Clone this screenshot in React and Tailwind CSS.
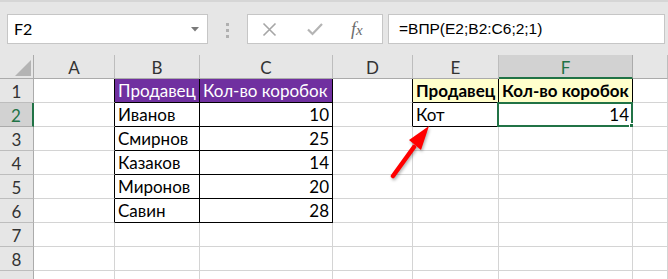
import { Fragment } from "react";

const COLS = ["A", "B", "C", "D", "E", "F", "G"];
const ROWS = [1, 2, 3, 4, 5, 6, 7, 8, 9];

// values of the sheet, keyed by cell address
const DATA = {
  B1: "Продавец",
  C1: "Кол-во коробок",
  B2: "Иванов",
  C2: "10",
  B3: "Смирнов",
  C3: "25",
  B4: "Казаков",
  C4: "14",
  B5: "Миронов",
  C5: "20",
  B6: "Савин",
  C6: "28",
  E1: "Продавец",
  F1: "Кол-во коробок",
  E2: "Кот",
  F2: "14",
};

// cells that have thin black borders
const inTable = (col, row) =>
  (["B", "C"].includes(col) && row >= 1 && row <= 6) ||
  (["E", "F"].includes(col) && row >= 1 && row <= 2);

const nextCol = (col) => COLS[COLS.indexOf(col) + 1];

function Cell({ col, row }) {
  const addr = col + row;
  const value = DATA[addr];
  const right = inTable(col, row) || (nextCol(col) && inTable(nextCol(col), row));
  const bottom = inTable(col, row) || inTable(col, row + 1);
  const isNumber = value && /^\d+$/.test(value);
  const purple = row === 1 && (col === "B" || col === "C");
  const yellow = row === 1 && (col === "E" || col === "F");
  const selected = addr === "F2";

  return (
    <div
      className={`relative flex h-[24px] items-end overflow-visible whitespace-nowrap border-r border-b px-[3px] pb-[1px] text-[17px] leading-[21px] ${
        right ? "border-r-black" : "border-r-[#d4d4d4]"
      } ${bottom ? "border-b-black" : "border-b-[#d4d4d4]"} ${
        isNumber ? "justify-end" : "justify-start"
      } ${purple ? "bg-[#7030a0] text-white" : ""} ${
        yellow ? "bg-[#ffffcc] font-bold text-black" : ""
      } ${!purple && !yellow ? "bg-white text-black" : ""}`}
    >
      {value}
      {selected && (
        <>
          <div className="pointer-events-none absolute -left-[2px] -top-[1px] bottom-[-1px] right-[-1px] border-2 border-[#217346]" />
          <div className="absolute -bottom-[4px] -right-[4px] h-[7px] w-[7px] border border-white bg-[#217346]" />
        </>
      )}
    </div>
  );
}

function Toolbar() {
  return (
    <div className="flex h-[55px] items-start border-t-2 border-t-[#d6d6d6] bg-[#e6e6e6] pt-[12px]">
      {/* name box */}
      <div className="ml-[7px] flex h-[30px] w-[201px] items-center justify-between border border-[#c6c6c6] bg-white pl-[6px] pr-[8px]">
        <span className="text-[16px] text-black">F2</span>
        <svg width="8" height="5" viewBox="0 0 8 5">
          <path d="M0 0h8L4 4.5z" fill="#7a7a7a" />
        </svg>
      </div>
      {/* splitter dots */}
      <div className="ml-[18px] mt-[9px] flex flex-col gap-[3px]">
        <div className="h-[3px] w-[3px] bg-[#b0b0b0]" />
        <div className="h-[3px] w-[3px] bg-[#b0b0b0]" />
        <div className="h-[3px] w-[3px] bg-[#b0b0b0]" />
      </div>
      {/* cancel / enter / fx */}
      <div className="ml-[18px] flex h-[30px] w-[136px] items-center border border-[#c6c6c6] bg-white">
        <svg className="ml-[14px]" width="15" height="15" viewBox="0 0 15 15">
          <path d="M1.5 1.5l12 12M13.5 1.5l-12 12" stroke="#a6a6a6" strokeWidth="1.6" />
        </svg>
        <svg className="ml-[30px]" width="16" height="14" viewBox="0 0 16 14">
          <path d="M1 7.5l4.5 4.5L15 2" stroke="#b4b4b4" strokeWidth="2.2" fill="none" />
        </svg>
        <span
          className="ml-[28px] text-[18px] italic text-[#6b6b6b]"
          style={{ fontFamily: '"Liberation Serif", serif' }}
        >
          f<span className="text-[15px]">x</span>
        </span>
      </div>
      {/* formula bar */}
      <div className="ml-[5px] mr-[3px] flex h-[30px] flex-1 items-center border border-[#c6c6c6] bg-white pl-[10px]">
        <span
          className="text-[15.5px] text-black"
          style={{ fontFamily: '"Liberation Sans", Arial, sans-serif' }}
        >
          =ВПР(E2;B2:C6;2;1)
        </span>
      </div>
    </div>
  );
}

function Arrow() {
  return (
    <svg
      className="pointer-events-none absolute left-0 top-0"
      width="668"
      height="279"
      style={{ filter: "drop-shadow(1px 2px 1.5px rgba(0,0,0,0.3))" }}
    >
      <path d="M393 176L414 147" stroke="#ff0000" strokeWidth="4.5" strokeLinecap="round" />
      <path d="M429 126L409 140L421 150Z" fill="#ff0000" />
    </svg>
  );
}

export default function App() {
  return (
    <div
      className="relative h-[279px] w-[668px] overflow-hidden bg-white"
      style={{ fontFamily: 'Lato, "Liberation Sans", sans-serif' }}
    >
      <Toolbar />
      <div className="grid grid-cols-[34px_81px_85px_133px_80px_86px_134px_1fr]">
        {/* corner */}
        <div className="relative h-[24px] border-r border-b border-r-[#ababab] border-b-[#ababab] bg-[#e6e6e6]">
          <svg className="absolute bottom-[2px] right-[2px]" width="16" height="16" viewBox="0 0 16 16">
            <path d="M16 0V16H0Z" fill="#b4b4b4" />
          </svg>
        </div>
        {COLS.map((c) => (
          <div
            key={c}
            className={`flex h-[24px] items-center justify-center border-r pt-[3px] text-[17px] ${
              c === "F"
                ? "border-b-2 border-b-[#217346] border-r-[#ababab] bg-[#d2d2d2] text-[#217346]"
                : "border-b border-b-[#ababab] border-r-[#bdbdbd] bg-[#e6e6e6] text-[#333]"
            }`}
          >
            {c === "G" ? "" : c}
          </div>
        ))}
        {ROWS.map((r) => (
          <Fragment key={r}>
            <div
              className={`flex h-[24px] items-center justify-center border-b pt-[3px] text-[17px] ${
                r === 2
                  ? "border-r-2 border-r-[#217346] border-b-[#ababab] bg-[#d2d2d2] text-[#217346]"
                  : "border-r border-r-[#ababab] border-b-[#bdbdbd] bg-[#e6e6e6] text-[#333]"
              }`}
            >
              {r === 9 ? "" : r}
            </div>
            {COLS.map((c) => (
              <Cell key={c + r} col={c} row={r} />
            ))}
          </Fragment>
        ))}
      </div>
      <Arrow />
    </div>
  );
}
